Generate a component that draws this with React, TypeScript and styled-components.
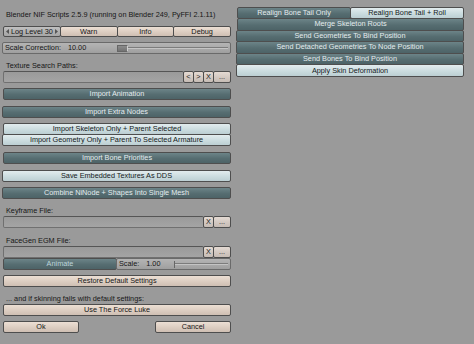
import React from "react";
import styled, { createGlobalStyle, css } from "styled-components";

type Tone = "dark" | "light" | "beige" | "grey" | "small";

const GlobalStyle = createGlobalStyle`
  html, body {
    margin: 0;
    padding: 0;
    background: #9a9a9a;
  }
  body {
    font-family: "Liberation Sans", Arial, sans-serif;
    font-size: 7.3px;
    color: #1c1c1c;
  }
`;

const Screen = styled.div`
  display: flex;
  align-items: flex-start;
  width: 474px;
  height: 344px;
  overflow: hidden;
  background: #9a9a9a;
`;

const LeftColumn = styled.div`
  display: flex;
  flex-direction: column;
  width: 228px;
  margin-left: 3px;
`;

const RightColumn = styled.div`
  display: flex;
  flex-direction: column;
  width: 227px;
  height: 70px;
  margin-left: 6px;
  margin-top: 7px;
`;

const Caption = styled.div<{ $h: number; $pb?: number }>`
  height: ${(p) => p.$h}px;
  display: flex;
  align-items: flex-end;
  padding: 0 0 ${(p) => p.$pb ?? 0}px 3px;
  box-sizing: border-box;
  line-height: 10px;
  color: #161616;
  white-space: nowrap;
`;

const tones = {
  dark: css`
    background: linear-gradient(#6c8488, #566d71 55%, #4d6367);
    color: #e4ecee;
  `,
  light: css`
    background: linear-gradient(#e2ecee, #cbdcdf 55%, #bccfd3);
    color: #151a1b;
  `,
  beige: css`
    background: linear-gradient(#ecdfd4, #dccdc1 55%, #cfbfb3);
    color: #161616;
  `,
  grey: css`
    background: linear-gradient(#c0c0c0, #b0b0b0 55%, #a6a6a6);
    color: #161616;
  `,
  small: css`
    background: linear-gradient(#e4dad3, #d2c8c1 55%, #c6bcb5);
    color: #222;
  `,
};

const Button = styled.div<{ $tone: Tone; $w?: number; $mt?: number }>`
  ${(p) => tones[p.$tone]};
  ${(p) => (p.$w ? `width: ${p.$w}px; flex: none;` : "flex: 1;")}
  margin-top: ${(p) => p.$mt ?? 0}px;
  height: 12px;
  box-sizing: border-box;
  border: 1px solid #4e4e4e;
  border-radius: 2px;
  display: flex;
  align-items: center;
  justify-content: center;
  gap: 2px;
  line-height: 10px;
  white-space: nowrap;
  overflow: hidden;
  & + & {
    margin-left: -1px;
  }
`;

const Row = styled.div<{ $mt?: number; $h?: number; $spread?: boolean }>`
  display: flex;
  justify-content: ${(p) => (p.$spread ? "space-between" : "flex-start")};
  margin-top: ${(p) => p.$mt ?? 0}px;
  height: ${(p) => p.$h ?? 12}px;
  & > * {
    height: 100%;
  }
`;

const Stack = styled.div<{ $mt?: number }>`
  display: flex;
  flex-direction: column;
  margin-top: ${(p) => p.$mt ?? 0}px;
  & > * + * {
    margin-top: -1px;
  }
`;

const FillStack = styled(Stack)`
  flex: 1;
  & > * {
    flex: 1;
    height: auto;
  }
`;

const Field = styled.div`
  flex: 1;
  box-sizing: border-box;
  background: linear-gradient(#9a9a9a, #a4a4a4);
  border: 1px solid #707070;
  border-top-color: #555;
  border-radius: 2px;
  margin-right: -1px;
`;

const Slider = styled.div<{ $w?: number }>`
  ${(p) => (p.$w ? `width: ${p.$w}px;` : "flex: 1;")}
  height: 12px;
  box-sizing: border-box;
  display: flex;
  align-items: center;
  background: linear-gradient(#b4b4b4, #a8a8a8 60%, #9e9e9e);
  border: 1px solid #6a6a6a;
  border-radius: 2px;
  color: #161616;
  line-height: 10px;
  white-space: nowrap;
  margin-left: -1px;
`;

const SliderLabel = styled.div`
  width: 50%;
  padding-left: 2px;
  box-sizing: border-box;
  display: flex;
  gap: 7px;
`;

const SliderTrack = styled.div`
  flex: 1;
  display: flex;
  align-items: center;
  height: 100%;
  padding-right: 2px;
`;

const SliderFill = styled.div<{ $w: number }>`
  width: ${(p) => p.$w}px;
  height: 7px;
  box-sizing: border-box;
  background: linear-gradient(#8c8c8c, #727272);
  border: 1px solid #666;
  border-right-color: #cfcfcf;
  ${(p) => p.$w < 3 && "background: none; border: none; border-left: 1px solid #666; width: 1px;"}
`;

const Groove = styled.div`
  flex: 1;
  height: 2px;
  border-top: 1px solid #7c7c7c;
  border-bottom: 1px solid #c4c4c4;
  box-sizing: border-box;
  margin-top: -1px;
`;

const AnimateButton = styled(Button)`
  color: #bcd4da;
`;

const Arrow = ({ dir }: { dir: "l" | "r" }) => (
  <svg width="3" height="5" viewBox="0 0 3 5">
    <path d={dir === "l" ? "M3 0 L0 2.5 L3 5 Z" : "M0 0 L3 2.5 L0 5 Z"} fill="#555" />
  </svg>
);

const NumSlider = ({ label, value, fill, w }: { label: string; value: string; fill: number; w?: number }) => (
  <Slider $w={w}>
    <SliderLabel>
      <span>{label}</span>
      <span>{value}</span>
    </SliderLabel>
    <SliderTrack>
      <SliderFill $w={fill} />
      <Groove />
    </SliderTrack>
  </Slider>
);

const FileRow = ({ extra }: { extra?: boolean }) => (
  <Row>
    <Field />
    {extra && (
      <>
        <Button $tone="small" $w={11}>&lt;</Button>
        <Button $tone="small" $w={11}>&gt;</Button>
      </>
    )}
    <Button $tone="small" $w={11}>X</Button>
    <Button $tone="small" $w={18}>...</Button>
  </Row>
);

const App: React.FC = () => {
  return (
    <Screen>
      <GlobalStyle />
      <LeftColumn>
        <Caption $h={26} $pb={6}>
          Blender NIF Scripts 2.5.9 (running on Blender 249, PyFFI 2.1.11)
        </Caption>
        <Row $h={11}>
          <Button $tone="grey">
            <Arrow dir="l" />
            Log Level 30
            <Arrow dir="r" />
          </Button>
          <Button $tone="beige">Warn</Button>
          <Button $tone="beige">Info</Button>
          <Button $tone="beige">Debug</Button>
        </Row>
        <Row $mt={5}>
          <NumSlider label="Scale Correction:" value="10.00" fill={11} />
        </Row>
        <Caption $h={17}>Texture Search Paths:</Caption>
        <FileRow extra />
        <Button $tone="dark" $mt={5}>Import Animation</Button>
        <Button $tone="dark" $mt={6}>Import Extra Nodes</Button>
        <Stack $mt={5}>
          <Button $tone="light">Import Skeleton Only + Parent Selected</Button>
          <Button $tone="light">Import Geometry Only + Parent To Selected Armature</Button>
        </Stack>
        <Button $tone="dark" $mt={6}>Import Bone Priorities</Button>
        <Button $tone="light" $mt={6}>Save Embedded Textures As DDS</Button>
        <Button $tone="dark" $mt={5}>Combine NiNode + Shapes Into Single Mesh</Button>
        <Caption $h={17}>Keyframe File:</Caption>
        <FileRow />
        <Caption $h={18}>FaceGen EGM File:</Caption>
        <FileRow />
        <Row>
          <AnimateButton $tone="dark" $w={114}>Animate</AnimateButton>
          <NumSlider label="Scale:" value="1.00" fill={0} />
        </Row>
        <Button $tone="beige" $mt={5}>Restore Default Settings</Button>
        <Caption $h={17}>... and if skinning fails with default settings:</Caption>
        <Button $tone="beige">Use The Force Luke</Button>
        <Row $mt={5} $spread>
          <Button $tone="beige" $w={76}>Ok</Button>
          <Button $tone="beige" $w={76}>Cancel</Button>
        </Row>
      </LeftColumn>
      <RightColumn>
        <FillStack>
          <Row $h={12}>
            <Button $tone="dark">Realign Bone Tail Only</Button>
            <Button $tone="light">Realign Bone Tail + Roll</Button>
          </Row>
          <Button $tone="dark">Merge Skeleton Roots</Button>
          <Button $tone="dark">Send Geometries To Bind Position</Button>
          <Button $tone="dark">Send Detached Geometries To Node Position</Button>
          <Button $tone="dark">Send Bones To Bind Position</Button>
          <Button $tone="light">Apply Skin Deformation</Button>
        </FillStack>
      </RightColumn>
    </Screen>
  );
};

export default App;
